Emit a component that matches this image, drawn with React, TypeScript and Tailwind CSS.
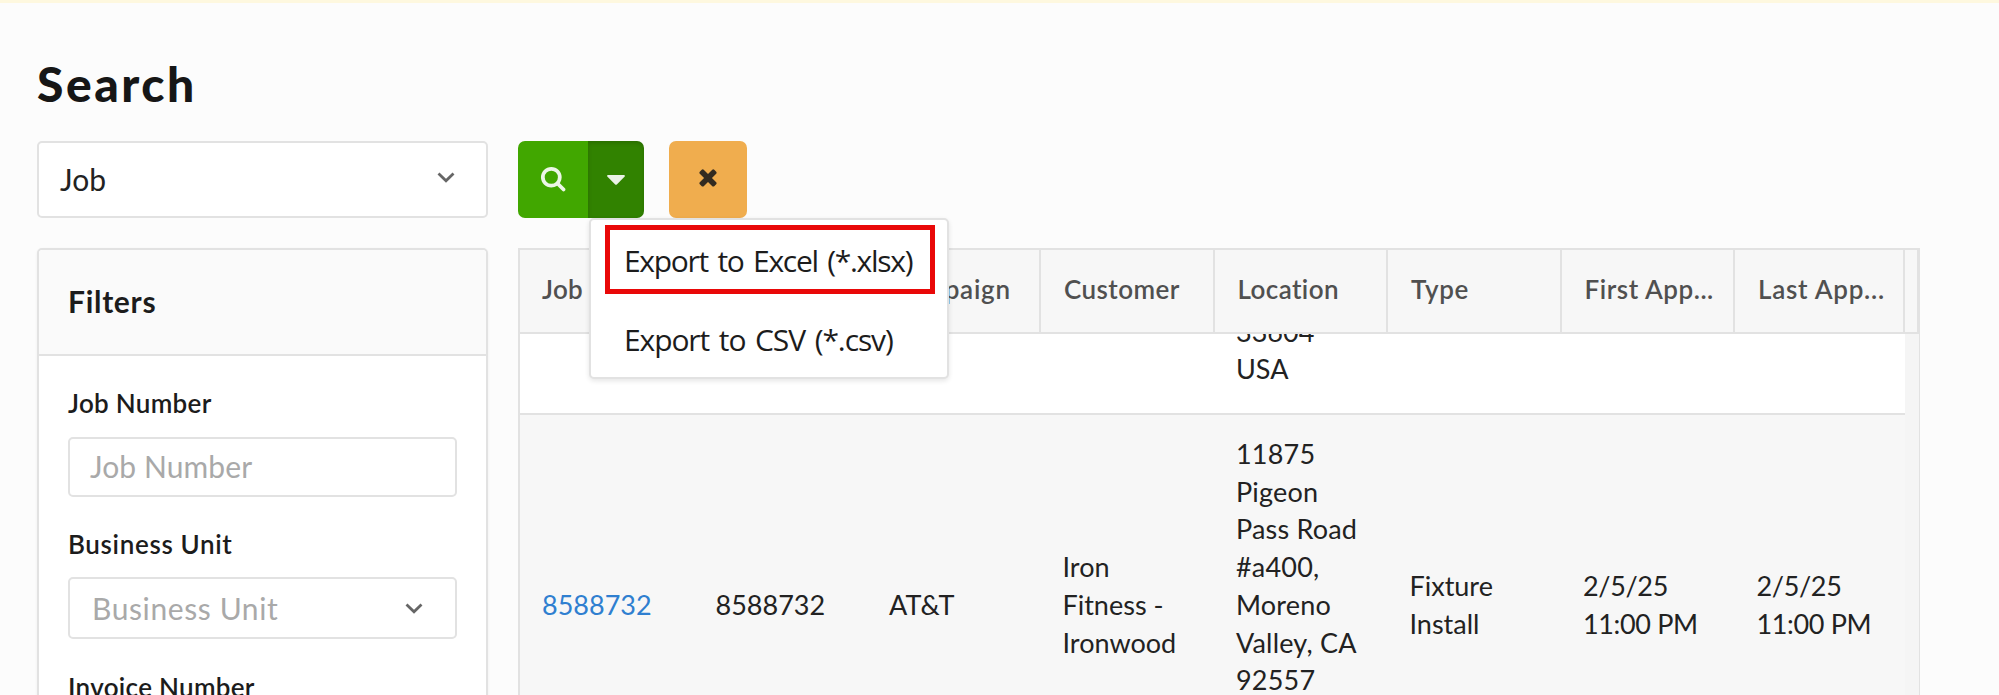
import type { ReactNode } from "react";

const columns = [
  { label: "Job", spacing: "-ml-px tracking-[0.3px]" },
  { label: "Job Number", spacing: "tracking-[0.3px]" },
  { label: "Campaign", spacing: "tracking-[0.75px]" },
  { label: "Customer", spacing: "tracking-[0.45px]" },
  { label: "Location", spacing: "tracking-[0.4px]" },
  { label: "Type", spacing: "tracking-[0.7px]" },
  { label: "First App...", spacing: "tracking-[0.55px]" },
  { label: "Last App...", spacing: "tracking-[0.75px]" },
];

const job = {
  id: "8588732",
  number: "8588732",
  campaign: "AT&T",
  customer: ["Iron", "Fitness -", "Ironwood"],
  location: ["11875", "Pigeon", "Pass Road", "#a400,", "Moreno", "Valley, CA", "92557"],
  type: ["Fixture", "Install"],
  first: ["2/5/25", "11:00 PM"],
  last: ["2/5/25", "11:00 PM"],
};

function Chevron() {
  return (
    <svg className="mb-[3px] h-[11px] w-[18px]" viewBox="0 0 18 11" fill="none">
      <path d="M1.5 1.5 9 8.7l7.5-7.2" stroke="#666" strokeWidth="2.8" />
    </svg>
  );
}

function Lines({ lines }: { lines: string[] }) {
  return (
    <>
      {lines.map((line, i) => (
        <div key={i} className="whitespace-nowrap">
          {line}
        </div>
      ))}
    </>
  );
}

function Cell({ children }: { children?: ReactNode }) {
  return <div className="pl-[22px]">{children}</div>;
}

function Label({ children }: { children: ReactNode }) {
  return (
    <div className="h-[34px] text-[26px] leading-[34px] font-semibold text-[#1c1c1c]">{children}</div>
  );
}

function SearchButtons() {
  return (
    <div className="flex">
      <div className="relative flex">
        <button className="flex h-[77px] w-[70px] items-center justify-center rounded-l-[7px] bg-[#41a700] pb-[2px]">
          <svg className="h-[26.4px] w-[26.4px]" viewBox="0 0 1792 1792" fill="#ecf6e6">
            <path d="M1216 832q0-185-131.5-316.5T768 384 451.5 515.5 320 832t131.5 316.5T768 1280t316.5-131.5T1216 832zm512 832q0 52-38 90t-90 38q-54 0-90-38l-343-342q-179 124-399 124-143 0-273.5-55.5t-225-150-150-225T64 832t55.5-273.5 150-225 225-150T768 128t273.5 55.5 225 150 150 225T1472 832q0 220-124 399l343 343q37 37 37 90z" />
          </svg>
        </button>
        <button className="flex h-[77px] w-[56px] items-center justify-center rounded-r-[7px] bg-[#318200] shadow-[inset_0_2px_4px_rgba(0,0,0,0.16)]">
          <svg className="mt-[1px] h-[10px] w-[18px]" viewBox="0 0 18 10" fill="#eaf2e6">
            <path d="M1.2 0h15.6c1 0 1.4 1 .7 1.7L9.8 9.4a1.2 1.2 0 0 1-1.6 0L.5 1.7C-.2 1 .2 0 1.2 0z" />
          </svg>
        </button>
        {/* Export menu */}
        <div className="absolute top-[77px] left-[71px] z-10 h-[161px] w-[360px] rounded-[5px] border-2 border-[#e2e2e2] bg-white pt-[5px] pl-[14px] font-['Open_Sans',sans-serif] text-[30px] text-[#1c1c1c] [word-spacing:3px] shadow-[0_2px_5px_rgba(0,0,0,0.1)]">
          <div className="flex h-[69px] w-[330px] items-center border-[5px] border-[#e90808] pt-[2px] pl-[14px] whitespace-nowrap">
            <span className="tracking-[-1.3px]">Export to Excel (*.xlsx)</span>
          </div>
          <div className="mt-[10px] flex h-[69px] items-center pt-[2px] pl-[19px] whitespace-nowrap">
            <span className="tracking-[-1.1px]">Export to CSV (*.csv)</span>
          </div>
        </div>
      </div>
      <button className="ml-[25px] flex h-[77px] w-[78px] items-center justify-center rounded-[7px] bg-[#f0ad4e] pb-[5px]">
        <svg className="h-[26px] w-[26px]" viewBox="0 0 1792 1792" fill="#332b20">
          <path d="M1490 1322q0 40-28 68l-136 136q-28 28-68 28t-68-28l-294-294-294 294q-28 28-68 28t-68-28l-136-136q-28-28-28-68t28-68l294-294-294-294q-28-28-28-68t28-68l136-136q28-28 68-28t68 28l294 294 294-294q28-28 68-28t68 28l136 136q28 28 28 68t-28 68l-294 294 294 294q28 28 28 68z" />
        </svg>
      </button>
    </div>
  );
}

function Filters() {
  return (
    <div className="h-[600px] w-[451px] shrink-0 rounded-[5px] border-2 border-[#e2e2e2] bg-white shadow-[0_1px_3px_rgba(0,0,0,0.06)]">
      <div className="flex h-[106px] items-center rounded-t-[4px] border-b-2 border-[#e2e2e2] bg-[#fafafa] pb-[2px] pl-[29px] text-[30px] font-bold tracking-[0.7px] text-[#1c1c1c]">
        Filters
      </div>
      <div className="flex flex-col px-[29px] pt-[30px]">
        <Label>
          <span className="tracking-[0.3px]">Job Number</span>
        </Label>
        <div className="mt-[17px] flex h-[60px] items-center rounded-[5px] border-2 border-[#e2e2e2] pb-[2px] pl-[20px] text-[30px] tracking-[0.1px] text-[#a9a9a9]">
          Job Number
        </div>
        <div className="mt-[30px]">
          <Label>
            <span className="tracking-[0.65px]">Business Unit</span>
          </Label>
        </div>
        <div className="mt-[16px] flex h-[62px] items-center justify-between rounded-[5px] border-2 border-[#e2e2e2] pr-[32px] pl-[22px] text-[30px] tracking-[0.6px] text-[#a9a9a9]">
          <span className="pt-[1px]">Business Unit</span>
          <span className="pt-[4px]">
            <Chevron />
          </span>
        </div>
        <div className="mt-[31px]">
          <Label>
            <span className="tracking-[0.3px]">Invoice Number</span>
          </Label>
        </div>
      </div>
    </div>
  );
}

function JobTable() {
  return (
    <div className="h-[600px] w-[1402px] border-2 border-r border-[#e2e2e2] bg-[#f5f5f5]">
      <div className="flex h-[84px] border-r-2 border-b-2 border-[#e2e2e2] bg-[#f7f7f7] text-[26px] font-semibold text-[#505050]">
        <div className="grid w-[1385px] grid-cols-[174px_173.5px_173.5px_173.5px_173.5px_173.5px_173.5px_170px]">
          {columns.map((col) => (
            <div key={col.label} className="flex items-center border-r-2 border-[#e2e2e2] pb-[3px] pl-[23px] whitespace-nowrap">
              <span className={col.spacing}>{col.label}</span>
            </div>
          ))}
        </div>
      </div>
      <div className="h-[515px] w-[1385px] overflow-hidden text-[27px] leading-[37.7px] text-[#222]">
        {/* tail of the row scrolled under the header */}
        <div className="grid h-[81px] grid-cols-[repeat(8,173.5px)] content-end overflow-hidden border-b-2 border-[#e2e2e2] bg-white pb-[25px]">
          <div className="col-start-5 pl-[22px]">
            <Lines lines={["33604", "USA"]} />
          </div>
        </div>
        <div className="grid h-[380px] grid-cols-[repeat(8,173.5px)] items-center bg-[#f7f7f7]">
          <Cell>
            <a className="text-[#2f7fd0]">{job.id}</a>
          </Cell>
          <Cell>{job.number}</Cell>
          <Cell>{job.campaign}</Cell>
          <Cell>
            <Lines lines={job.customer} />
          </Cell>
          <div className="self-start pt-[20px] pl-[22px] tracking-[0.2px]">
            <Lines lines={job.location} />
          </div>
          <Cell>
            <Lines lines={job.type} />
          </Cell>
          <div className="pl-[22px] tracking-[-0.35px]">
            <Lines lines={job.first} />
          </div>
          <div className="pl-[22px] tracking-[-0.35px]">
            <Lines lines={job.last} />
          </div>
        </div>
      </div>
    </div>
  );
}

export default function App() {
  return (
    <div className="h-[695px] w-[1999px] overflow-hidden border-t-[3px] border-[#fef8df] bg-[#fcfcfc] font-['Lato',sans-serif] [font-variant-ligatures:none]">
      <div className="pl-[37px]">
        <h1 className="h-[138px] pt-[51px] text-[48px] leading-[60px] font-black tracking-[2.5px] text-[#161616]">
          Search
        </h1>
        <div className="flex">
          <div className="mr-[30px] flex h-[77px] w-[451px] items-center justify-between rounded-[5px] border-2 border-[#e2e2e2] bg-white pr-[31px] pb-[1px] pl-[21px] text-[30px] text-[#222]">
            Job
            <Chevron />
          </div>
          <SearchButtons />
        </div>
        <div className="mt-[30px] flex gap-[30px]">
          <Filters />
          <JobTable />
        </div>
      </div>
    </div>
  );
}
